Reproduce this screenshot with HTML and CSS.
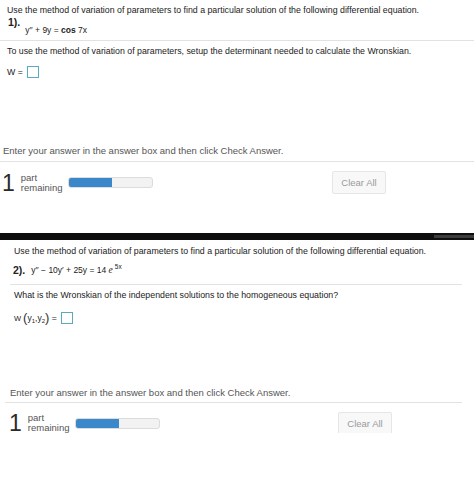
FILE: index.html
```html
<!DOCTYPE html>
<html>
<head>
<meta charset="utf-8">
<link rel="stylesheet" href="styles.css">
</head>
<body>
<section class="q q1">
  <p class="intro">Use the method of variation of parameters to find a particular solution of the following differential equation.</p>
  <div class="problem">
    <span class="num">1).</span>
    <span class="eq">y′′ + 9y = <b>cos</b> 7x</span>
  </div>
  <hr class="rule">
  <p class="prompt">To use the method of variation of parameters, setup the determinant needed to calculate the Wronskian.</p>
  <div class="answer">W = <span class="box"></span></div>
  <p class="instr">Enter your answer in the answer box and then click Check Answer.</p>
  <hr class="rule rule-foot">
  <div class="footer">
    <span class="count">1</span>
    <span class="parts">part<br>remaining</span>
    <span class="bar"><span class="fill"></span></span>
    <button class="clear">Clear All</button>
  </div>
</section>
<div class="divider"><span class="divider-end"></span></div>
<section class="q q2">
  <p class="intro">Use the method of variation of parameters to find a particular solution of the following differential equation.</p>
  <div class="problem">
    <span class="num">2).</span>
    <span class="eq">y′′ − 10y′ + 25y = 14 <i class="e">e</i><sup class="sup">5x</sup></span>
  </div>
  <hr class="rule">
  <p class="prompt">What is the Wronskian of the independent solutions to the homogeneous equation?</p>
  <div class="answer"><span class="wfn">W</span><span class="paren">(</span><span class="wv">y<sub>1</sub>,y<sub>2</sub></span><span class="paren">)</span> = <span class="box"></span></div>
  <p class="instr">Enter your answer in the answer box and then click Check Answer.</p>
  <hr class="rule rule-foot">
  <div class="footer">
    <span class="count">1</span>
    <span class="parts">part<br>remaining</span>
    <span class="bar"><span class="fill"></span></span>
    <button class="clear">Clear All</button>
  </div>
</section>
</body>
</html>
```

FILE: styles.css
```css
html, body {
  margin: 0;
  padding: 0;
  background: #fff;
}
body {
  width: 474px;
  font-family: "Liberation Sans", Arial, sans-serif;
  color: #222;
}
p { margin: 0; }

.q { display: flex; flex-direction: column; }

.intro, .prompt {
  font-size: 8.8px;
  line-height: 12px;
  white-space: nowrap;
}

.problem {
  display: flex;
  align-items: flex-start;
}
.num {
  font-size: 10.5px;
  font-weight: bold;
  line-height: 12px;
}
.eq {
  font-size: 8.5px;
  line-height: 12px;
}
.eq b { font-weight: bold; }
.e { font-family: "Liberation Serif", serif; font-size: 9.5px; }
.sup { font-size: 6.5px; vertical-align: 4px; line-height: 0; margin-left: 2px; }

.rule {
  border: none;
  height: 1px;
  background: #e2e2e2;
  margin: 0;
}

.answer {
  display: flex;
  align-items: center;
  font-size: 8.8px;
  height: 14px;
  white-space: pre;
}
.box {
  width: 10px;
  height: 10px;
  border: 1px solid #5aaabd;
  margin-left: 2px;
}
.wfn { font-size: 7.5px; margin-right: 2px; }
.paren { font-size: 13px; line-height: 14px; color: #333; }
.wv { font-size: 8.5px; }
.answer sub { font-size: 6px; vertical-align: -2px; line-height: 0; }

.instr {
  font-size: 9.5px;
  line-height: 12px;
  color: #555;
  white-space: nowrap;
}

.footer {
  display: flex;
  align-items: center;
}
.count {
  font-size: 23px;
  line-height: 18px;
  color: #2a2a2a;
}
.parts {
  font-size: 9.5px;
  line-height: 10px;
  color: #555;
  margin-left: 6px;
}
.bar {
  display: flex;
  width: 83px;
  height: 9px;
  border: 1px solid #dcdcdc;
  border-radius: 3px;
  background: #f2f2f2;
  overflow: hidden;
  margin-left: 5px;
}
.fill {
  width: 43px;
  background: #3a87c9;
}
.clear {
  margin-left: auto;
  width: 54px;
  height: 23px;
  padding: 0;
  border: 1px solid #e6e6e6;
  border-radius: 2px;
  background: #f8f8f8;
  color: #9a9a9a;
  font-family: "Liberation Sans", Arial, sans-serif;
  font-size: 9.5px;
}

/* Question 1 */
.q1 .intro { margin: 4px 0 0 7px; }
.q1 .problem { margin-left: 8px; height: 19px; }
.q1 .eq { margin: 8px 0 0 5px; }
.q1 .rule { margin-top: 5px; }
.q1 .prompt { margin: 4px 0 0 7px; }
.q1 .answer { margin: 8px 0 0 7px; }
.q1 .instr { margin: 66px 0 0 3px; }
.q1 .rule-foot { margin-top: 4px; }
.q1 .footer { margin: 9px 88px 0 2px; height: 23px; }

.divider {
  display: flex;
  justify-content: flex-end;
  margin-top: 39px;
  height: 7px;
  background: #0e0e0e;
}
.divider-end {
  width: 40px;
  height: 3px;
  margin-top: 2px;
  background: #3b3b3b;
}

/* Question 2 */
.q2 .intro { margin: 5px 0 0 14px; }
.q2 .problem { margin: 6px 0 0 13px; align-items: center; height: 14px; }
.q2 .eq { margin-left: 6px; }
.q2 .rule { margin: 7px 12px 0 10px; }
.q2 .prompt { margin: 4px 0 0 14px; }
.q2 .answer { margin: 9px 0 0 14px; height: 16px; }
.q2 .instr { margin: 61px 0 0 10px; }
.q2 .rule-foot { margin: 3px 12px 0 5px; }
.q2 .footer { margin: 10px 82px 0 9px; height: 20px; }
```
